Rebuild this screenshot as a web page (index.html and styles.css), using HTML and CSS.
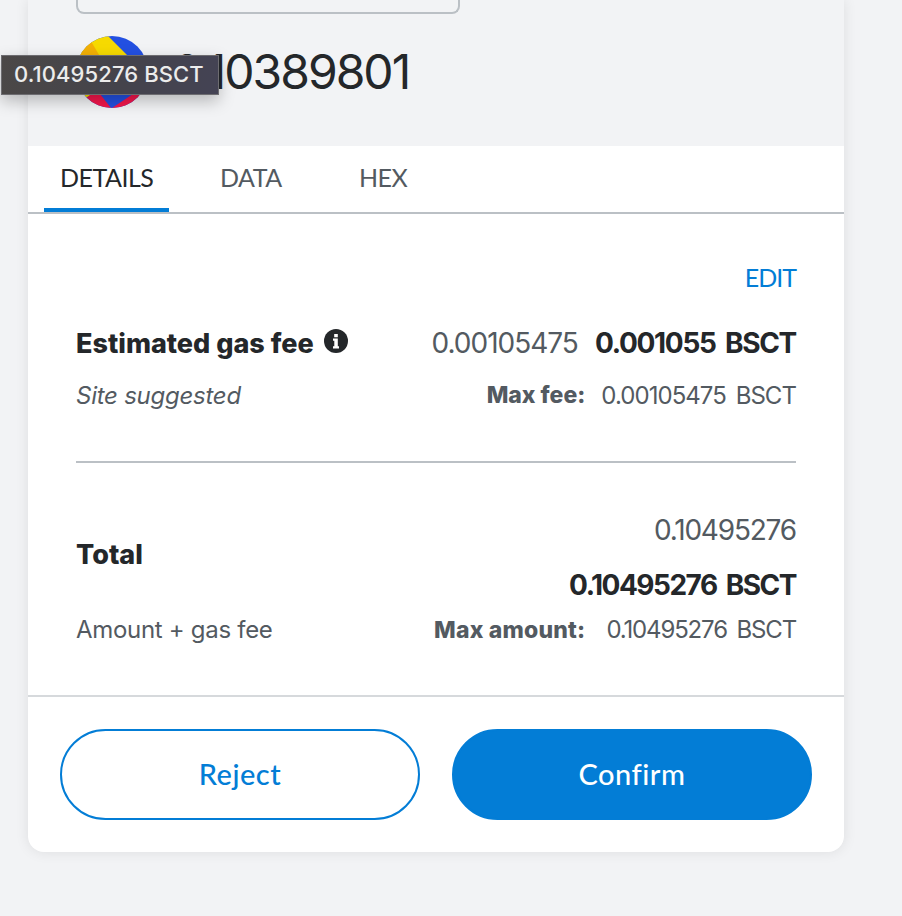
FILE: index.html
```html
<!DOCTYPE html>
<html lang="en">
<head>
<meta charset="utf-8">
<title>Confirm transaction</title>
<link rel="stylesheet" href="styles.css">
</head>
<body>
<main class="card">
  <header class="summary">
    <div class="action-box"></div>
    <div class="amount">
      <svg class="identicon" viewBox="0 0 72 72" aria-hidden="true">
        <defs><clipPath id="disc"><circle cx="36" cy="36" r="36"/></clipPath></defs>
        <g clip-path="url(#disc)">
          <path fill="#2350e1" d="M0 0h72v72H0z"/>
          <path fill="#f6da00" d="M0 0H32L72 40 8 62 0 72z"/>
          <path fill="#f3b006" d="M12 0L26 24 38 50 0 55V0z"/>
          <path fill="#f5174c" d="M6 66l9-8h9l11 14H0zM36 72l24-16 12 0v16z"/>
        </g>
      </svg>
      <span class="amount-value num">0.10389801</span>
    </div>
  </header>
  <nav class="tabs">
    <span class="tab tab-details active"><span>DETAILS</span></span>
    <span class="tab tab-data"><span>DATA</span></span>
    <span class="tab tab-hex"><span>HEX</span></span>
  </nav>
  <section class="details">
    <div class="edit-row"><a class="edit">EDIT</a></div>
    <div class="row fee-row">
      <div class="label"><span class="fee-label">Estimated gas fee</span>
        <svg class="info" viewBox="0 0 24 24" aria-hidden="true"><circle cx="12" cy="12" r="12" fill="#24272a"/><path fill="#fff" d="M10.2 5h3.6v3.2h-3.6zM9 9.6h4.8v7.6h1.2v2.2H9v-2.2h1.3v-5.4H9z"/></svg>
      </div>
      <div class="values"><span class="num fee-light">0.00105475</span><strong class="num fee-bold">0.001055 BSCT</strong></div>
    </div>
    <div class="row sub-row fee-sub">
      <em class="suggested">Site suggested</em>
      <div class="values"><strong class="max-fee">Max fee:</strong><span class="num fee-max">0.00105475 BSCT</span></div>
    </div>
    <div class="row total-row">
      <strong class="total">Total</strong>
      <div class="stack"><span class="num total-light">0.10495276</span><strong class="num total-bold">0.10495276 BSCT</strong></div>
    </div>
    <div class="row sub-row sum-row">
      <span class="sum-label">Amount + gas fee</span>
      <div class="values"><strong class="max-amount">Max amount:</strong><span class="num amount-max">0.10495276 BSCT</span></div>
    </div>
  </section>
  <footer class="actions">
    <button class="btn reject"><span>Reject</span></button>
    <button class="btn confirm"><span>Confirm</span></button>
  </footer>
</main>
<div class="tooltip"><span>0.10495276 BSCT</span></div>
</body>
</html>
```
FILE: styles.css
```css
* { box-sizing: border-box; }
body {
  margin: 0;
  height: 916px;
  overflow: hidden;
  background: #f2f3f5;
  color: #24272a;
  font-family: Lato, "Liberation Sans", sans-serif;
  font-variant-ligatures: none;
}
.num, .details { font-family: Inter, "Liberation Sans", sans-serif; }
span, strong, em, a { white-space: nowrap; }
.card {
  width: 816px;
  height: 852px;
  margin-left: 28px;
  background: #fff;
  border-radius: 0 0 16px 16px;
  box-shadow: 0 0 14px rgba(0, 0, 0, 0.09);
}
.summary { height: 146px; padding: 0 48px; background: #f2f3f5; }
.action-box {
  width: 384px;
  height: 14px;
  border: 2px solid #bbc0c5;
  border-top: 0;
  border-radius: 0 0 8px 8px;
}
.amount { display: flex; align-items: center; height: 72px; margin-top: 22px; gap: 24px; }
.identicon { width: 72px; height: 72px; }
.amount-value { font-size: 48px; line-height: 72px; letter-spacing: -2px; }
.tabs {
  display: flex;
  height: 68px;
  padding-left: 16px;
  border-bottom: 2px solid #bbc0c5;
}
.tab { padding: 0 16px; height: 66px; line-height: 62px; font-size: 25px; letter-spacing: -0.5px; color: #535a61; }
.tab.active { color: #24272a; border-bottom: 4px solid #037dd6; }
.tab-details { width: 125px; }
.tab-data { width: 94px; margin-left: 35px; }
.tab-hex { margin-left: 45px; }
.details { height: 481px; padding: 48px 48px 0; }
.edit-row { display: flex; justify-content: flex-end; height: 32px; }
.edit { font-family: Lato, "Liberation Sans", sans-serif; font-size: 25px; line-height: 30px; letter-spacing: -1px; color: #037dd6; }
.row { display: flex; justify-content: space-between; align-items: center; }
.fee-row { height: 56px; margin-top: 21px; font-size: 28px; }
.label { display: flex; align-items: center; gap: 8px; font-weight: 800; }
.fee-label { width: 240px; font-size: 27px; letter-spacing: 0; }
.info { width: 24px; height: 24px; margin-top: -5px; }
.values { display: flex; align-items: center; }
.fee-light, .total-light { font-size: 28px; color: #535a61; }
.fee-light { letter-spacing: -1px; margin-right: 17px; }
.fee-bold, .total-bold { font-size: 28px; font-weight: 700; word-spacing: 4px; }
.fee-bold { letter-spacing: -1.3px; }
.total-bold { letter-spacing: -1.5px; }
.sub-row { height: 40px; font-size: 24px; color: #535a61; }
.fee-sub { height: 92px; padding-bottom: 44px; border-bottom: 2px solid #bbc0c5; }
.suggested { font-size: 24px; letter-spacing: -0.25px; margin-top: 2px; }
.max-fee { font-weight: 800; font-size: 23px; margin-right: 16px; margin-top: 2px; }
.max-amount { font-weight: 800; font-size: 23px; letter-spacing: 0.2px; margin-right: 21px; margin-top: 1px; }
.fee-max, .amount-max { word-spacing: 4px; }
.fee-max { letter-spacing: -0.95px; margin-top: 2px; }
.amount-max { letter-spacing: -1.15px; }
.total-row { height: 110px; margin-top: 37px; }
.total { font-size: 27px; font-weight: 800; margin-top: -2px; }
.stack { display: flex; flex-direction: column; align-items: flex-end; line-height: 55px; margin-top: 6px; }
.total-light { letter-spacing: -1.2px; }
.sum-row { padding-bottom: 2px; }
.sum-label { font-size: 24px; letter-spacing: -0.3px; }
.actions {
  display: flex;
  gap: 32px;
  height: 157px;
  padding: 32px;
  border-top: 2px solid #d6d9dc;
}
.btn {
  width: 360px;
  height: 91px;
  padding: 0 0 3px;
  border: 2px solid #037dd6;
  border-radius: 46px;
  background: #fff;
  color: #037dd6;
  font: 500 29px Lato, "Liberation Sans", sans-serif;
  letter-spacing: 0.5px;
}
.confirm { background: #037dd6; color: #fff; }
.tooltip {
  position: absolute;
  left: 1px;
  top: 55px;
  width: 218px;
  height: 40px;
  padding-left: 12px;
  border: 1px solid #6d6c70;
  background: linear-gradient(100deg, #4b4847, #44434b 55%, #444354);
  box-shadow: 0 6px 16px rgba(0, 0, 0, 0.25);
  color: #ececec;
  font: 500 22px/36px Inter, "Liberation Sans", sans-serif;
  letter-spacing: 0.1px;
}
```
